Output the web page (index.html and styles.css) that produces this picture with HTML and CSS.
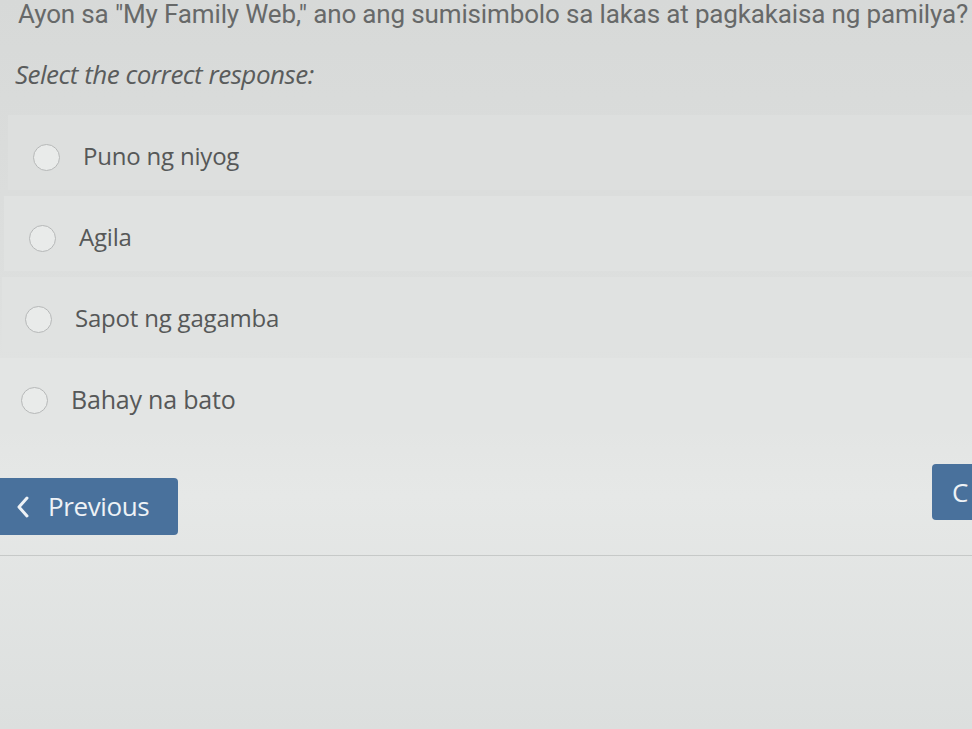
FILE: index.html
```html
<!DOCTYPE html>
<html lang="tl">
<head>
<meta charset="utf-8">
<title>Tanong</title>
<link rel="stylesheet" href="styles.css">
</head>
<body>
<main class="quiz">
  <p class="question">Ayon sa "My Family Web," ano ang sumisimbolo sa lakas at pagkakaisa ng pamilya?</p>
  <p class="prompt">Select the correct response:</p>
  <ul class="choices">
    <li class="choice"><span class="radio"></span><span class="label">Puno ng niyog</span></li>
    <li class="choice"><span class="radio"></span><span class="label">Agila</span></li>
    <li class="choice"><span class="radio"></span><span class="label">Sapot ng gagamba</span></li>
    <li class="choice"><span class="radio"></span><span class="label">Bahay na bato</span></li>
  </ul>
  <div class="nav">
    <button class="btn prev" type="button">
      <svg class="chev" width="14" height="24" viewBox="0 0 14 24" aria-hidden="true"><path d="M11 3 L3 12 L11 21" fill="none" stroke="#eef2f6" stroke-width="3" stroke-linecap="round" stroke-linejoin="round"/></svg>
      <span>Previous</span>
    </button>
    <button class="btn next" type="button"><span>C</span></button>
  </div>
  <hr class="divider">
</main>
</body>
</html>
```

FILE: styles.css
```css
html, body {
  margin: 0;
  padding: 0;
  height: 100%;
}

body {
  background: #dcdfde;
  font-family: "Open Sans", "Noto Sans", sans-serif;
  overflow: hidden;
}

.quiz {
  width: 972px;
  overflow: hidden;
  background: linear-gradient(180deg, #d7d9d8 0%, #dddfde 40%, #e6e8e7 68%, #dcdfde 100%);
  min-height: 729px;
}

.question {
  margin: 0;
  padding: 0 0 0 18px;
  font-family: Roboto, "Liberation Sans", sans-serif;
  font-size: 26px;
  line-height: 28px;
  color: #676969;
  white-space: nowrap;
  letter-spacing: -0.15px;
}

.prompt {
  margin: 30px 0 0 0;
  padding-left: 15px;
  font-family: "Open Sans", sans-serif;
  font-style: italic;
  font-size: 26px;
  line-height: 32px;
  color: #5a5c5c;
  letter-spacing: -0.5px;
}

.choices {
  list-style: none;
  margin: 25px 0 0 0;
  padding: 0;
  display: flex;
  flex-direction: column;
  gap: 6px;
}

.choice {
  height: 75px;
  box-sizing: border-box;
  padding-top: 10px;
  display: flex;
  align-items: center;
  gap: 23px;
  background: #e0e2e1;
  color: #565858;
  font-size: 24px;
  letter-spacing: -0.2px;
}

.choice:nth-child(1) { margin-left: 8px; padding-left: 25px; background: #dddfde; }
.choice:nth-child(2) { margin-left: 4px; padding-left: 25px; }
.choice:nth-child(3) { margin-left: 2px; padding-left: 23px; }
.choice:nth-child(4) { margin-left: 0; padding-left: 21px; background: #e3e5e4; font-size: 25px; }

.radio {
  width: 25px;
  height: 25px;
  border: 1.5px solid #b6b8b8;
  border-radius: 50%;
  background: #e9ebea;
  flex: none;
}

.label {
  line-height: 32px;
  padding-bottom: 4px;
}

.nav {
  display: flex;
  justify-content: space-between;
  align-items: flex-start;
  margin-top: 31px;
}

.btn {
  border: none;
  background: #49719c;
  color: #eef2f6;
  border-radius: 4px;
  font-family: "Open Sans", sans-serif;
  font-size: 26px;
  display: flex;
  align-items: center;
  cursor: pointer;
}

.prev {
  margin-top: 14px;
  width: 178px;
  height: 57px;
  padding: 0 0 0 16px;
  gap: 18px;
  border-radius: 0 4px 4px 0;
  letter-spacing: -0.4px;
}

.prev span {
  padding-bottom: 2px;
}

.next {
  width: 40px;
  height: 56px;
  padding: 0 0 0 20px;
  border-radius: 4px 0 0 4px;
  overflow: hidden;
  white-space: nowrap;
  font-size: 26px;
}

.divider {
  margin: 20px 0 0 0;
  border: none;
  border-top: 1.5px solid #c6c9c8;
}
```
